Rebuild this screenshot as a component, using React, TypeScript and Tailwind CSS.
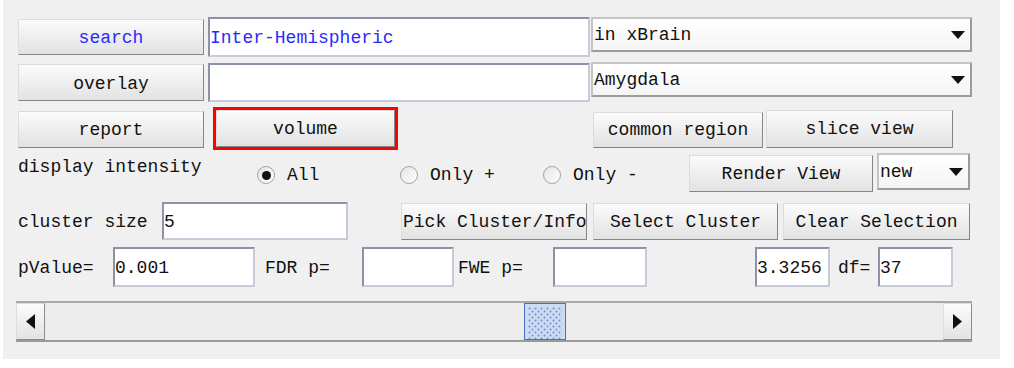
import React from "react";

const font = "font-['Liberation_Mono',monospace] text-[18px] leading-[20px]";

function Btn({ label, className = "", blue = false }: { label: string; className?: string; blue?: boolean }) {
  return (
    <div
      className={`flex shrink-0 items-center justify-center border border-[#dcdcdc] border-r-[#858585] border-b-[#858585] bg-linear-to-b from-[#fbfbfb] to-[#e2e2e2] whitespace-pre ${
        blue ? "text-[#2a2aff]" : "text-[#111]"
      } ${className}`}
    >
      {label}
    </div>
  );
}

function Field({ value = "", className = "", blue = false }: { value?: string; className?: string; blue?: boolean }) {
  return (
    <div
      className={`flex shrink-0 items-center overflow-hidden border-2 border-[#8d92a6] border-r-[#c7cad8] border-b-[#c7cad8] bg-white whitespace-pre ${
        blue ? "text-[#2a2aff]" : "text-[#111]"
      } ${className}`}
    >
      {value}
    </div>
  );
}

function Combo({ value, className = "" }: { value: string; className?: string }) {
  return (
    <div
      className={`flex shrink-0 items-center justify-between border-2 border-[#c4c4c4] border-r-[#9c9c9c] border-b-[#9c9c9c] bg-linear-to-b from-white to-[#f4f4f4] pl-[1px] pr-[5px] text-[#111] ${className}`}
    >
      <span>{value}</span>
      <svg width="14" height="8" viewBox="0 0 14 8">
        <path d="M0 0H14L7 8Z" fill="#111" />
      </svg>
    </div>
  );
}

function Radio({ label, checked = false, className = "" }: { label: string; checked?: boolean; className?: string }) {
  return (
    <div className={`flex shrink-0 items-center ${className}`}>
      <span className="flex h-[18px] w-[18px] items-center justify-center rounded-full border border-[#a3a3a3] bg-linear-to-br from-[#e4e4e4] to-white">
        {checked && <span className="h-[9px] w-[9px] rounded-full bg-[#111]" />}
      </span>
      <span className="ml-[12px] whitespace-pre">{label}</span>
    </div>
  );
}

function Arrow({ dir }: { dir: "left" | "right" }) {
  return (
    <div className="flex h-full w-[29px] shrink-0 items-center justify-center border border-[#dcdcdc] border-r-[#8a8a8a] border-b-[#8a8a8a] bg-linear-to-b from-[#fbfbfb] to-[#e3e3e3]">
      <svg width="9" height="15" viewBox="0 0 9 15">
        {dir === "left" ? <path d="M9 0V15L0 7.5Z" fill="#111" /> : <path d="M0 0V15L9 7.5Z" fill="#111" />}
      </svg>
    </div>
  );
}

function Thumb() {
  return (
    <div className="ml-[479px] h-full w-[42px] shrink-0 border border-[#4b6ec6] bg-[#cddbf1]">
      <svg width="40" height="100%" className="h-full w-full">
        <defs>
          <pattern id="dots" width="6" height="6" patternUnits="userSpaceOnUse">
            <circle cx="1.5" cy="1.5" r="1" fill="#6d8ed3" />
            <circle cx="4.5" cy="4.5" r="1" fill="#6d8ed3" />
          </pattern>
        </defs>
        <rect x="3" y="3" width="34" height="32" fill="url(#dots)" />
      </svg>
    </div>
  );
}

export default function App() {
  return (
    <div className={`h-[368px] w-[1014px] bg-white pl-[3px] ${font}`}>
      <div className="flex h-[359px] w-[997px] flex-col bg-[#f0f0f0]">
        {/* row 1 */}
        <div className="mt-[17px] flex h-[40px] items-start">
          <Btn label="search" blue className="mt-[2px] ml-[15px] h-[36px] w-[186px] pt-[2px]" />
          <Field value="Inter-Hemispheric" blue className="ml-[4px] h-[40px] w-[382px] pt-[2px]" />
          <Combo value="in xBrain" className="ml-[1px] h-[35px] w-[381px]" />
        </div>

        {/* row 2 */}
        <div className="mt-[5px] flex h-[40px] items-start">
          <Btn label="overlay" className="mt-[2px] ml-[15px] h-[37px] w-[186px] pt-[2px]" />
          <Field className="mt-[1px] ml-[4px] h-[39px] w-[382px]" />
          <Combo value="Amygdala" className="ml-[1px] h-[35px] w-[381px]" />
        </div>

        {/* row 3 */}
        <div className="mt-[5px] flex h-[43px] items-start">
          <Btn label="report" className="mt-[4px] ml-[15px] h-[37px] w-[186px]" />
          <div className="ml-[9px] h-[43px] w-[185px] shrink-0 border-[3px] border-[#ff0000]">
            <Btn label="volume" className="h-full w-full" />
          </div>
          <Btn label="common region" className="mt-[5px] ml-[195px] h-[36px] w-[170px]" />
          <Btn label="slice view" className="mt-[3px] ml-[3px] h-[38px] w-[187px]" />
        </div>

        {/* row 4 */}
        <div className="mt-[3px] flex h-[39px] items-start text-[#111]">
          <div className="mt-[4px] ml-[15px] w-[239px] shrink-0 whitespace-pre">display intensity</div>
          <Radio label="All" checked className="mt-[12px] w-[143px]" />
          <Radio label="Only +" className="mt-[12px] w-[143px]" />
          <Radio label="Only -" className="mt-[12px] w-[146px]" />
          <Btn label="Render View" className="mt-[2px] h-[37px] w-[184px]" />
          <Combo value="new" className="ml-[4px] h-[37px] w-[93px]" />
        </div>

        {/* row 5 */}
        <div className="mt-[10px] flex h-[38px] items-start text-[#111]">
          <div className="mt-[10px] ml-[15px] w-[144px] shrink-0 whitespace-pre">cluster size</div>
          <Field value="5" className="h-[38px] w-[186px] pt-[2px]" />
          <Btn label="Pick Cluster/Info" className="mt-[1px] ml-[53px] h-[37px] w-[186px] justify-start overflow-hidden pl-[1px]" />
          <Btn label="Select Cluster" className="mt-[1px] ml-[6px] h-[37px] w-[185px]" />
          <Btn label="Clear Selection" className="mt-[1px] ml-[5px] h-[37px] w-[187px]" />
        </div>

        {/* row 6 */}
        <div className="mt-[7px] flex h-[40px] items-start text-[#111]">
          <div className="mt-[11px] ml-[15px] w-[95px] shrink-0 whitespace-pre">pValue=</div>
          <Field value="0.001" className="h-[40px] w-[142px] pt-[2px]" />
          <div className="mt-[11px] w-[107px] shrink-0 pl-[10px] whitespace-pre">FDR p=</div>
          <Field className="h-[40px] w-[92px]" />
          <div className="mt-[11px] w-[99px] shrink-0 pl-[4px] whitespace-pre">FWE p=</div>
          <Field className="h-[40px] w-[94px]" />
          <div className="w-[108px] shrink-0" />
          <Field value="3.3256" className="h-[40px] w-[75px] pt-[2px]" />
          <div className="mt-[11px] w-[48px] shrink-0 pl-[8px] whitespace-pre">df=</div>
          <Field value="37" className="h-[40px] w-[75px] pt-[2px]" />
        </div>

        {/* row 7: scrollbar */}
        <div className="mt-[14px] ml-[13px] flex h-[41px] w-[956px] items-stretch border-y-2 border-t-[#a8a8a8] border-b-[#9a9a9a] bg-[#ececec]">
          <Arrow dir="left" />
          <Thumb />
          <div className="flex-1" />
          <Arrow dir="right" />
        </div>
      </div>
    </div>
  );
}
